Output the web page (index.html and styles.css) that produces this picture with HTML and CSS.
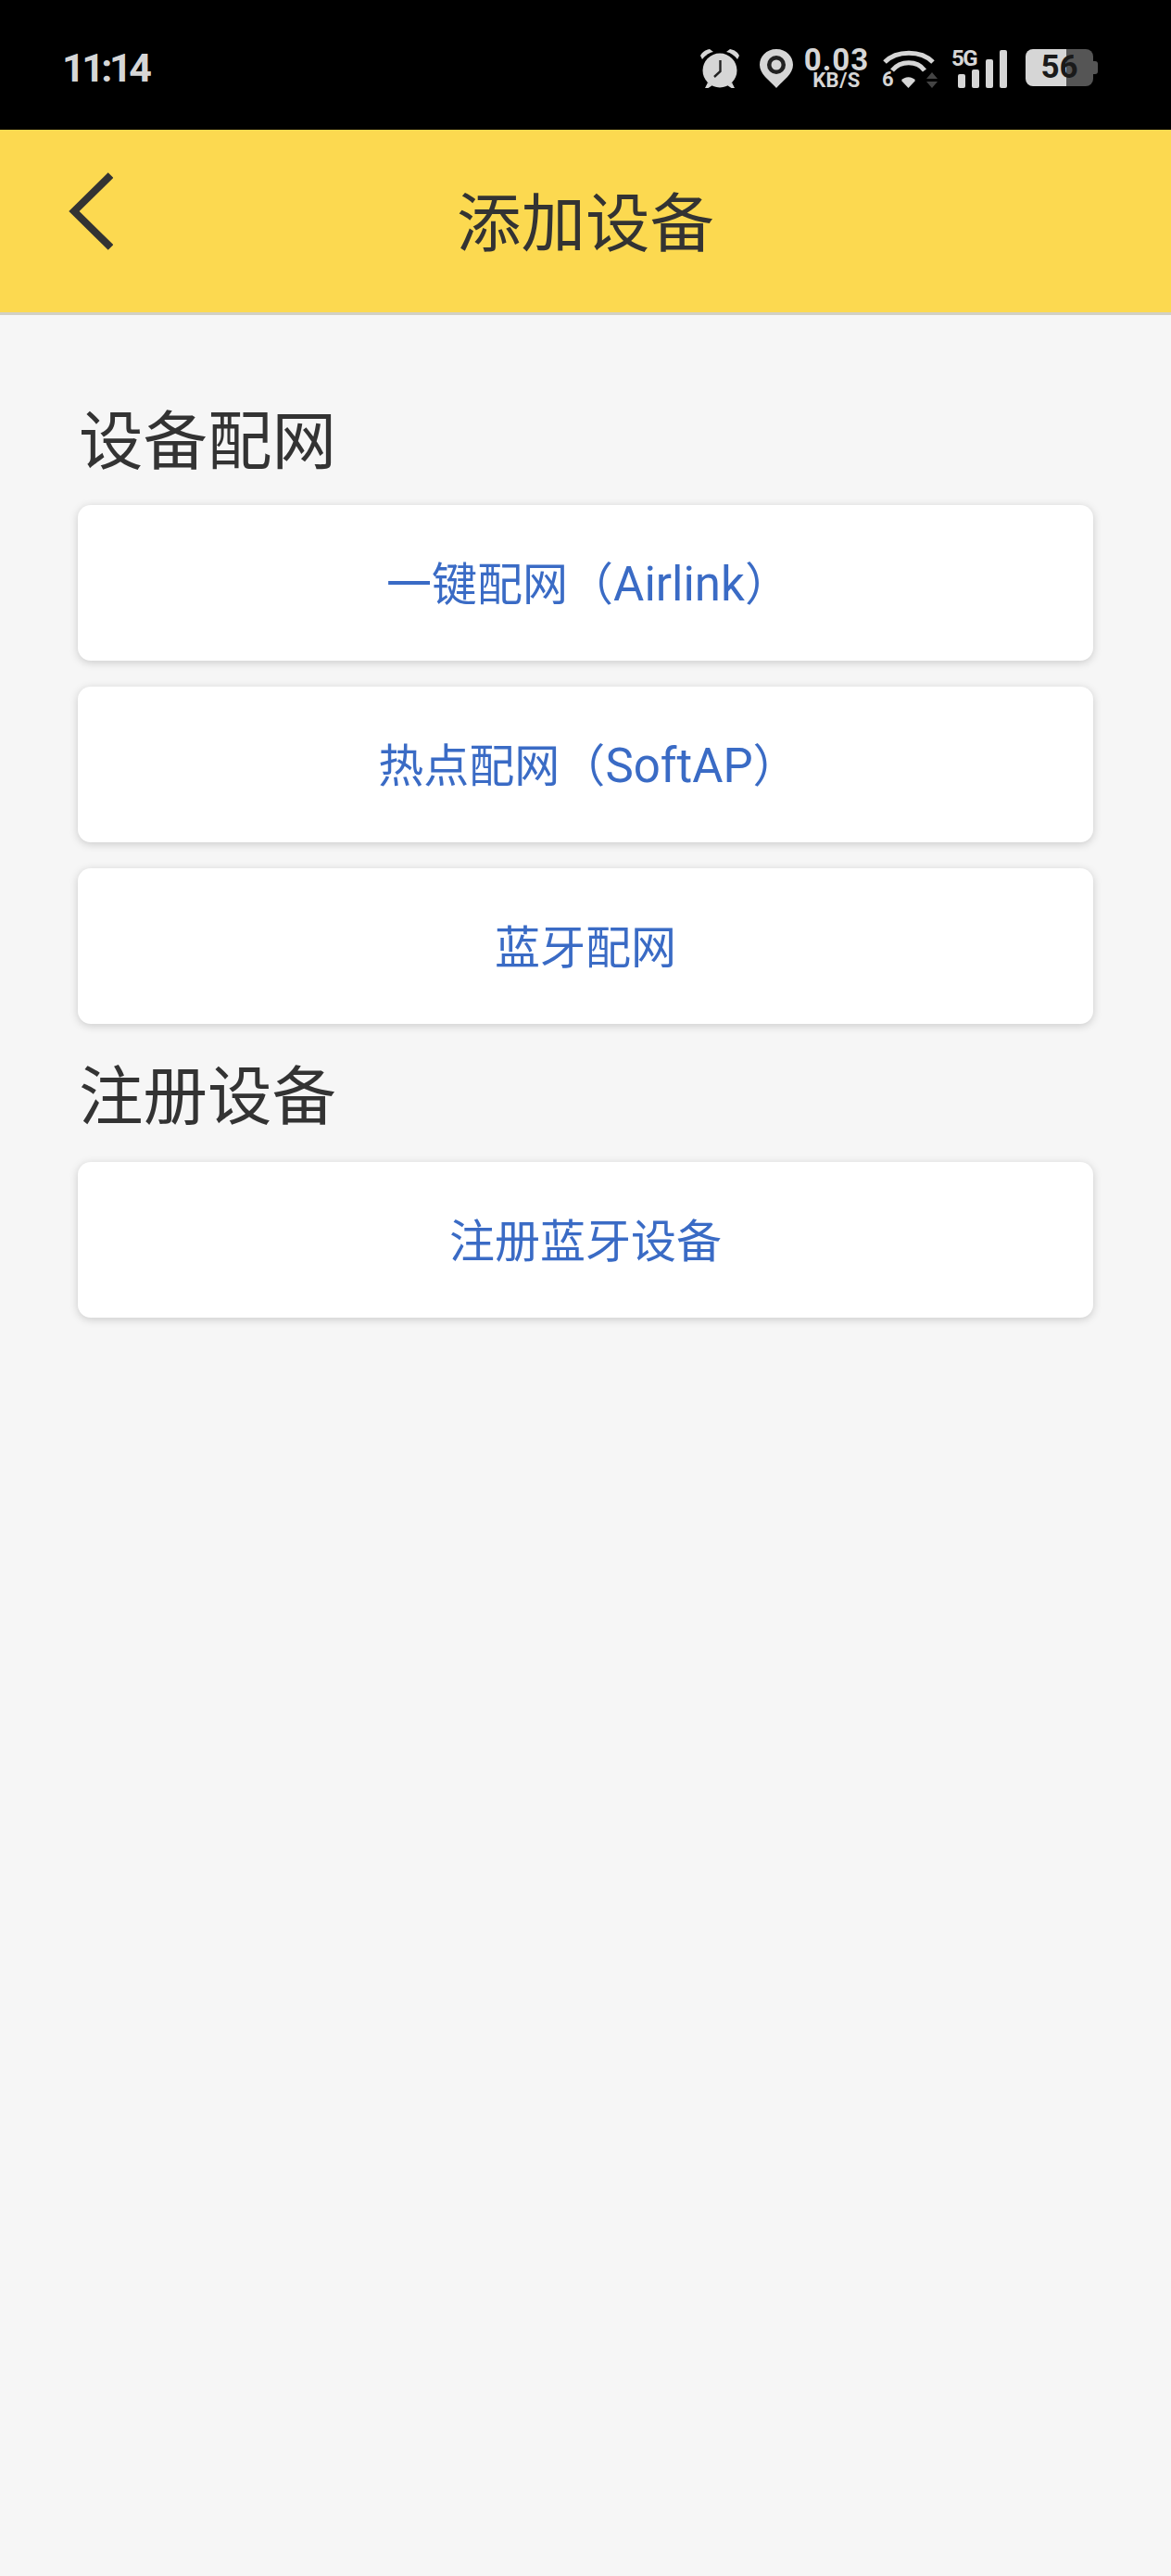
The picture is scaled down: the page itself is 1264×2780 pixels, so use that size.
FILE: index.html
```html
<!DOCTYPE html>
<html lang="zh-CN">
<head>
    <meta charset="UTF-8">
    <meta name="viewport" content="width=device-width, initial-scale=1.0">
    <title>添加设备</title>
    <link rel="stylesheet" href="styles.css">
</head>
<body>
    <!-- Status bar -->
    <div class="status-bar">
        <span class="clock">11:14</span>
        <div class="status-icons">
            <svg class="icon-alarm" width="44" height="46" viewBox="0 0 44 46">
                <path d="M1 10 C3 6 6 4 11 3 L15 6 C10 7 6 10 3 14 Z M43 10 C41 6 38 4 33 3 L29 6 C34 7 38 10 41 14 Z" fill="#d6d6d6"/>
                <circle cx="22" cy="26" r="18.5" fill="#d6d6d6"/>
                <path d="M9 39 L6 45 L9.500 45 L14 42 Z M35 39 L38 45 L34.500 45 L30 42 Z" fill="#d6d6d6"/>
                <path d="M22.500 15 L22.500 27 L16 33" fill="none" stroke="#222" stroke-width="2.4"/>
            </svg>
            <svg class="icon-pin" width="38" height="46" viewBox="0 0 38 46">
                <path d="M19 3 C8 3 1 11 1 20 C1 30 11 36 19 45 C27 36 37 30 37 20 C37 11 30 3 19 3 Z" fill="#d6d6d6"/>
                <circle cx="19" cy="20" r="10" fill="#222"/>
                <circle cx="19" cy="20" r="5.500" fill="#d6d6d6"/>
            </svg>
            <div class="net-speed">
                <span class="speed-num">0.03</span>
                <span class="speed-unit">KB/S</span>
            </div>
            <div class="wifi">
                <svg width="64" height="46" viewBox="0 0 64 46">
                    <path d="M5 17 C18 4 44 4 57 17 M13 26 C22 15 40 15 48 26" fill="none" stroke="#d6d6d6" stroke-width="5"/>
                    <path d="M23 37 C26 32 35 32 38 37 L30.500 45 Z" fill="#d6d6d6"/>
                    <path d="M50 35 L56 28 L62 35 Z M50 38 L62 38 L56 45 Z" fill="#444"/>
                </svg>
                <span class="wifi-six">6</span>
            </div>
            <div class="signal">
                <span class="signal-label">5G</span>
                <div class="bars">
                    <i class="bar bar-1"></i>
                    <i class="bar bar-2"></i>
                    <i class="bar bar-3"></i>
                    <i class="bar bar-4"></i>
                </div>
            </div>
            <div class="battery">
                <div class="battery-body">56</div>
                <i class="battery-tip"></i>
            </div>
        </div>
    </div>

    <!-- Title bar -->
    <div class="title-bar">
        <svg class="back" width="50" height="86" viewBox="0 0 50 86">
            <path d="M47.500 4 L8 43 L47.500 82" fill="none" stroke="#333" stroke-width="8"/>
        </svg>
        <h1>添加设备</h1>
    </div>

    <!-- Content -->
    <div class="content">
        <h2>设备配网</h2>
        <div class="card-list">
            <button class="card card-latin">一键配网（<span class="latin">Airlink</span>）</button>
            <button class="card card-latin">热点配网（<span class="latin">SoftAP</span>）</button>
            <button class="card">蓝牙配网</button>
        </div>
        <h2>注册设备</h2>
        <div class="card-list">
            <button class="card">注册蓝牙设备</button>
        </div>
    </div>
</body>
</html>
```

FILE: styles.css
```css
* {
    box-sizing: border-box;
}
body {
    margin: 0;
    min-height: 2780px;
    background-color: #f6f6f6;
    font-family: Roboto, "Noto Sans CJK SC", sans-serif;
    color: #333;
}
.status-bar {
    height: 140px;
    background-color: #000;
    color: #d6d6d6;
    display: flex;
    align-items: center;
    justify-content: space-between;
    padding: 6px 79px 0 67px;
}
.clock {
    font-size: 43px;
    font-weight: 700;
    letter-spacing: -3.500px;
}
.status-icons {
    display: flex;
    align-items: center;
}
.icon-alarm {
    margin-right: 20px;
}
.icon-pin {
    margin-right: 11px;
}
.net-speed {
    width: 70px;
    display: flex;
    flex-direction: column;
    align-items: center;
    font-weight: 700;
    margin-right: 12px;
}
.speed-num {
    font-size: 33px;
    line-height: 27px;
    letter-spacing: 1px;
}
.speed-unit {
    font-size: 22px;
    line-height: 18px;
    letter-spacing: 0.500px;
}
.wifi {
    position: relative;
    width: 64px;
    height: 46px;
    margin-right: 13px;
}
.wifi-six {
    position: absolute;
    left: 2px;
    bottom: -2px;
    font-size: 22px;
    line-height: 24px;
    font-weight: 700;
}
.signal {
    position: relative;
    width: 60px;
    height: 46px;
    margin-right: 20px;
}
.signal-label {
    position: absolute;
    left: 0;
    top: 0;
    font-size: 24px;
    line-height: 26px;
    font-weight: 700;
    letter-spacing: -1.500px;
}
.bars {
    position: absolute;
    right: 0;
    bottom: 1px;
    display: flex;
    align-items: flex-end;
    gap: 7px;
}
.bar {
    width: 8px;
    background-color: #d6d6d6;
    border-radius: 2px;
}
.bar-1 {
    height: 15px;
}
.bar-2 {
    height: 20px;
}
.bar-3 {
    height: 31px;
}
.bar-4 {
    height: 41px;
}
.battery {
    display: flex;
    align-items: center;
}
.battery-body {
    width: 73px;
    height: 40px;
    border-radius: 8px;
    background: linear-gradient(to right, #d6d6d6 0, #d6d6d6 60%, #555 60%, #555 100%);
    color: #1a1a1a;
    font-size: 35px;
    font-weight: 700;
    line-height: 40px;
    text-align: center;
}
.battery-tip {
    width: 5px;
    height: 14px;
    background-color: #555;
    border-radius: 0 3px 3px 0;
}
.title-bar {
    position: relative;
    height: 200px;
    background-color: #fcd950;
    border-bottom: 3px solid #d2d0c4;
    display: flex;
    align-items: center;
    justify-content: center;
    padding-bottom: 6px;
}
.back {
    position: absolute;
    left: 72px;
    top: 45px;
}
h1 {
    margin: 0;
    font-size: 69.500px;
    font-weight: 400;
    color: #333;
}
.content {
    padding: 0 84px;
}
h2 {
    margin: 0;
    font-size: 69.500px;
    font-weight: 400;
    color: #333;
    height: 149px;
    display: flex;
    align-items: center;
    padding: 0 0 5px 1px;
}
.content h2:first-child {
    height: 205px;
    padding-top: 56px;
    padding-bottom: 0;
}
.card-list {
    display: flex;
    flex-direction: column;
    gap: 28px;
}
.card {
    height: 168px;
    border: none;
    border-radius: 14px;
    background-color: #fff;
    box-shadow: 0 2px 10px rgba(0, 0, 0, 0.18);
    color: #3a6bc5;
    font-family: inherit;
    font-size: 49px;
    padding: 0 0 5px;
}
.card-latin {
    padding-left: 6px;
}
.latin {
    font-size: 51px;
}
```
